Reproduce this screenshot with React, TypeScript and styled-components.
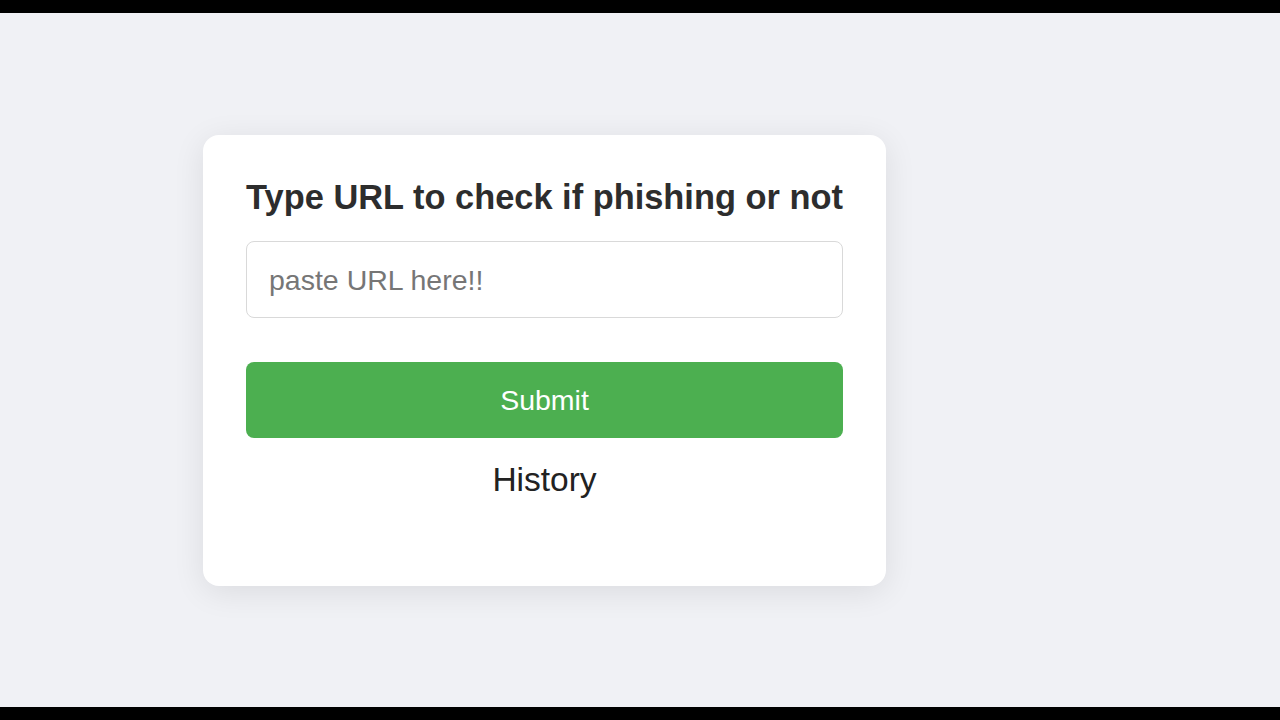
import React from "react";
import styled, { createGlobalStyle } from "styled-components";

const Global = createGlobalStyle`
  html, body { margin: 0; padding: 0; }
  body { font-family: "Liberation Sans", Arial, sans-serif; background: #000; }
  * { box-sizing: border-box; }
`;

const Frame = styled.div`
  width: 1280px;
  height: 720px;
  display: flex;
  flex-direction: column;
  background: #000;
`;

const Letterbox = styled.div`
  height: 13px;
  flex: none;
  background: #000;
`;

const Stage = styled.main`
  flex: 1;
  background: #f0f1f5;
  padding: 122px 0 0 203px;
`;

const Card = styled.section`
  width: 683px;
  height: 451px;
  background: #fff;
  border-radius: 16px;
  box-shadow: 0 6px 32px rgba(0, 0, 0, 0.09);
  padding: 42px 43px 0;
  display: flex;
  flex-direction: column;
  align-items: stretch;
`;

const Title = styled.h2`
  margin: 0;
  font-size: 34.4px;
  line-height: 40px;
  font-weight: 700;
  color: #2d2d2d;
  text-align: center;
  white-space: nowrap;
`;

const UrlInput = styled.input`
  margin-top: 24px;
  height: 77px;
  width: 100%;
  border: 1px solid #d9d9d9;
  border-radius: 8px;
  padding: 2px 22px 0;
  font-family: "Liberation Sans", Arial, sans-serif;
  font-size: 28.5px;
  color: #333;
  outline: none;
  &::placeholder { color: #767676; }
`;

const SubmitButton = styled.button`
  margin-top: 44px;
  height: 76px;
  width: 100%;
  border: none;
  border-radius: 8px;
  background: #4caf50;
  color: #fff;
  font-family: "Liberation Sans", Arial, sans-serif;
  font-size: 28.5px;
  cursor: pointer;
`;

const HistoryLink = styled.a`
  margin-top: 22px;
  font-size: 33.5px;
  line-height: 40px;
  color: #222;
  text-align: center;
  text-decoration: none;
`;

export default function App() {
  return (
    <Frame>
      <Global />
      <Letterbox />
      <Stage>
        <Card>
          <Title>Type URL to check if phishing or not</Title>
          <UrlInput placeholder="paste URL here!!" />
          <SubmitButton>Submit</SubmitButton>
          <HistoryLink href="#">History</HistoryLink>
        </Card>
      </Stage>
      <Letterbox />
    </Frame>
  );
}
